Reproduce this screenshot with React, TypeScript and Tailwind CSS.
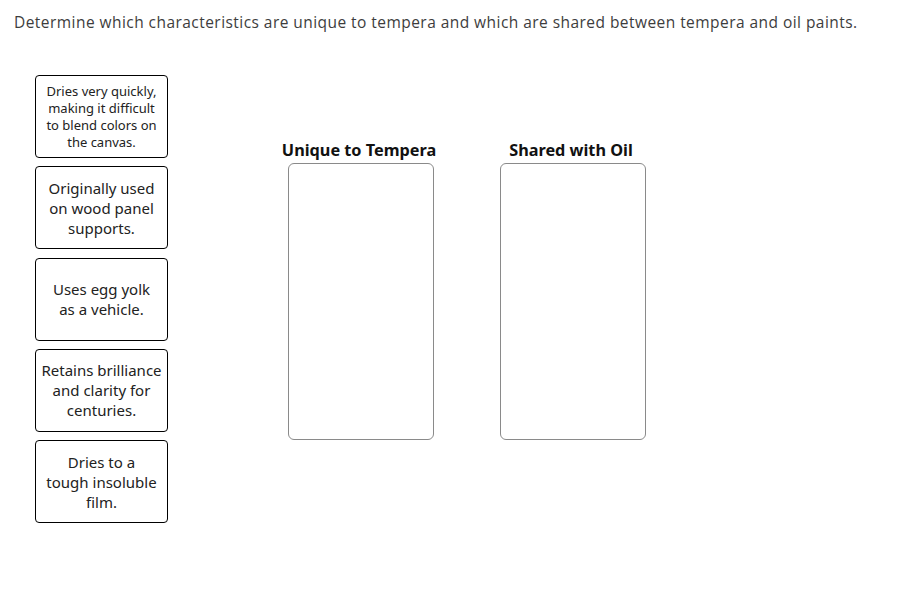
const cards = [
  { lines: ["Dries very quickly,", "making it difficult", "to blend colors on", "the canvas."], small: true },
  { lines: ["Originally used", "on wood panel", "supports."] },
  { lines: ["Uses egg yolk", "as a vehicle."] },
  { lines: ["Retains brilliance", "and clarity for", "centuries."] },
  { lines: ["Dries to a", "tough insoluble", "film."] },
];

const zones = ["Unique to Tempera", "Shared with Oil"];

export default function App() {
  return (
    <div className="min-h-[598px] bg-white">
      <p className="whitespace-nowrap px-[14px] pt-[12px] text-[15.5px] leading-[20px] tracking-[0.45px] text-[#3d3d3d] [font-family:'Open_Sans',sans-serif]">
        Determine which characteristics are unique to tempera and which are shared between tempera and oil paints.
      </p>
      <div className="ml-[35px] mt-[43px] flex items-start [font-family:'Noto_Sans',sans-serif]">
        <div className="flex w-[133px] flex-col gap-[8.25px]">
          {cards.map((c) => (
            <div
              key={c.lines[0]}
              className={`flex h-[83px] flex-col items-center justify-center whitespace-nowrap rounded-[4px] border border-black text-center text-[#222] ${
                c.small ? "text-[13px] leading-[17px]" : "text-[15px] leading-[20px]"
              }`}
            >
              {c.lines.map((l) => (
                <span key={l}>{l}</span>
              ))}
            </div>
          ))}
        </div>
        <div className="ml-[120px] mt-[65px] flex gap-[66px]">
          {zones.map((z) => (
            <div key={z} className="flex w-[146px] flex-col items-center">
              <div className="-ml-[4px] whitespace-nowrap text-[16.25px] font-bold leading-[20px] text-[#111]">{z}</div>
              <div className="mt-[3px] h-[277px] w-[146px] rounded-[6px] border border-[#8a8a8a]" />
            </div>
          ))}
        </div>
      </div>
    </div>
  );
}
